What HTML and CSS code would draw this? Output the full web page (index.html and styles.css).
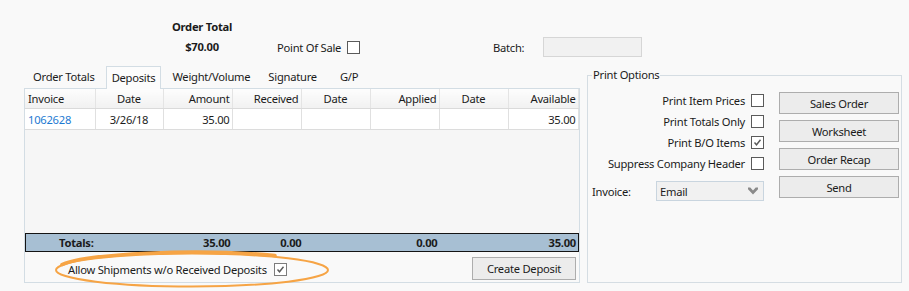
FILE: index.html
```html
<!DOCTYPE html>
<html lang="en">
<head>
    <meta charset="UTF-8">
    <meta name="viewport" content="width=device-width, initial-scale=1.0">
    <title>Order Deposits</title>
    <link rel="stylesheet" href="styles.css">
</head>
<body>
<div class="screen">
    <!-- Order header -->
    <div class="top">
        <div class="total-col">
            <div class="total-label">Order Total</div>
            <div class="total-value">$70.00</div>
        </div>
        <div class="top-fields">
            <div class="pos">
                <span>Point Of Sale</span>
                <span class="check"></span>
            </div>
            <div class="batch">
                <span class="batch-label">Batch:</span>
                <span class="batch-input"></span>
            </div>
        </div>
    </div>

    <div class="main">
        <!-- Tab control -->
        <div class="tabs">
            <div class="tab-strip">
                <div class="tab">Order Totals</div>
                <div class="tab active">Deposits</div>
                <div class="tab">Weight/Volume</div>
                <div class="tab">Signature</div>
                <div class="tab tab-gp">G/P</div>
            </div>
            <div class="tab-panel">
                <div class="grid">
                    <table class="deposits">
                        <colgroup>
                            <col class="c70"><col class="c68"><col class="c69"><col class="c69">
                            <col class="c69"><col class="c69"><col class="c69"><col class="c70">
                        </colgroup>
                        <thead>
                            <tr>
                                <th class="left">Invoice</th>
                                <th>Date</th>
                                <th class="right">Amount</th>
                                <th class="right">Received</th>
                                <th>Date</th>
                                <th class="right">Applied</th>
                                <th>Date</th>
                                <th class="right">Available</th>
                            </tr>
                        </thead>
                        <tbody>
                            <tr>
                                <td class="left link">1062628</td>
                                <td>3/26/18</td>
                                <td class="right">35.00</td>
                                <td></td>
                                <td></td>
                                <td></td>
                                <td></td>
                                <td class="right">35.00</td>
                            </tr>
                        </tbody>
                    </table>
                </div>
                <table class="totals">
                    <colgroup>
                        <col class="c70"><col class="c68"><col class="c69"><col class="c69">
                        <col class="c69"><col class="c69"><col class="c69"><col class="c70">
                    </colgroup>
                    <tr>
                        <td colspan="2" class="totals-label">Totals:</td>
                        <td>35.00</td>
                        <td class="flush">0.00</td>
                        <td></td>
                        <td>0.00</td>
                        <td></td>
                        <td>35.00</td>
                    </tr>
                </table>
                <div class="panel-foot">
                    <div class="allow">
                        <span>Allow Shipments w/o Received Deposits</span>
                        <span class="check">
                            <svg width="11" height="11" viewBox="0 0 11 11"><path d="M2.5 5.5 L4.5 7.8 L8.5 2.8" fill="none" stroke="#5a5a5a" stroke-width="1.4"/></svg>
                        </span>
                    </div>
                    <button class="btn deposit-btn">Create Deposit</button>
                </div>
            </div>
        </div>

        <!-- Print options group -->
        <fieldset class="print-options">
            <legend>Print Options</legend>
            <div class="opt-body">
                <div class="opt-left">
                    <div class="opt-row"><span>Print Item Prices</span><span class="check"></span></div>
                    <div class="opt-row"><span>Print Totals Only</span><span class="check"></span></div>
                    <div class="opt-row">
                        <span>Print B/O Items</span>
                        <span class="check">
                            <svg width="11" height="11" viewBox="0 0 11 11"><path d="M2.5 5.5 L4.5 7.8 L8.5 2.8" fill="none" stroke="#5a5a5a" stroke-width="1.4"/></svg>
                        </span>
                    </div>
                    <div class="opt-row"><span>Suppress Company Header</span><span class="check"></span></div>
                    <div class="invoice-row">
                        <span class="invoice-label">Invoice:</span>
                        <div class="select">
                            <span>Email</span>
                            <svg width="10" height="8" viewBox="0 0 10 8"><polygon points="0,0.5 2.3,0.5 5,3.6 7.7,0.5 10,0.5 10,2.2 5,7.5 0,2.2" fill="#8a8a8a"/></svg>
                        </div>
                    </div>
                </div>
                <div class="opt-right">
                    <button class="btn">Sales Order</button>
                    <button class="btn">Worksheet</button>
                    <button class="btn">Order Recap</button>
                    <button class="btn">Send</button>
                </div>
            </div>
        </fieldset>
    </div>

    <!-- highlight annotation drawn over the checkbox -->
    <svg class="mark" width="290" height="42" viewBox="0 0 290 42">
        <ellipse cx="142" cy="20" rx="136" ry="16.5" fill="none" stroke="#f6a445" stroke-width="2"/>
        <path d="M 12 14.6 A 137 17 0 0 1 225 5.5" fill="none" stroke="#f6a445" stroke-width="3.5" stroke-linecap="round"/>
    </svg>
</div>
</body>
</html>
```

FILE: styles.css
```css
/* Order deposits screen */
body {
    margin: 0;
    background-color: #f9f9f9;
    font-family: "Noto Sans", "Open Sans", sans-serif;
    font-size: 11.2px;
    letter-spacing: -0.25px;
    color: #1b1b1b;
}

.screen {
    position: relative;
    width: 909px;
    height: 291px;
    overflow: hidden;
}

/* header */
.top {
    display: flex;
    height: 65px;
    padding-top: 19px;
    box-sizing: border-box;
}

.total-col {
    width: 100px;
    margin-left: 152px;
    text-align: center;
    font-weight: bold;
    line-height: 16px;
}

.total-value {
    margin-top: 4px;
}

.top-fields {
    display: flex;
    margin-top: 20px;
    height: 16px;
    align-items: center;
}

.pos {
    display: flex;
    align-items: center;
    gap: 6px;
    width: 200px;
    margin-left: 25px;
}

.batch {
    display: flex;
    align-items: center;
    margin-left: 16px;
}

.batch-label {
    width: 50px;
}

.batch-input {
    width: 97px;
    height: 18px;
    background-color: #f1f1f1;
    border: 1px solid #d6d6d6;
}

.check {
    display: inline-flex;
    align-items: center;
    justify-content: center;
    width: 11px;
    height: 11px;
    background-color: #fff;
    border: 1px solid #5a5a5a;
}

/* tabs */
.main {
    display: flex;
    align-items: flex-start;
    margin-left: 24px;
}

.tabs {
    width: 556px;
}

.tab-strip {
    display: flex;
    height: 23px;
    align-items: flex-end;
}

.tab {
    padding: 0 9px;
    line-height: 22px;
    height: 22px;
}

.tab.active {
    position: relative;
    padding: 0 5px;
    margin: 0 2px;
    height: 22px;
    border: 1px solid #d3dde4;
    border-bottom: none;
    background-color: #fcfcfc;
    margin-bottom: -1px;
    z-index: 1;
}

.tab-gp {
    padding-left: 14px;
}

.tab-panel {
    height: 195px;
    border: 1px solid #d3dde4;
    box-sizing: border-box;
    background-color: #f9f9f9;
}

.grid {
    height: 144px;
    background-color: #f6f6f6;
}

table {
    border-collapse: collapse;
    table-layout: fixed;
    width: 553px;
}

.c70 { width: 70px; }
.c68 { width: 68px; }
.c69 { width: 69px; }

.deposits th {
    height: 19px;
    padding: 0 2px;
    font-weight: normal;
    text-align: center;
    white-space: nowrap;
    overflow: hidden;
    background: linear-gradient(#fdfdfd, #f1f1f1);
    border-right: 1px solid #e4e4e4;
    border-bottom: 1px solid #dadada;
}

.deposits td {
    height: 20px;
    padding: 0 2px;
    text-align: center;
    background-color: #fff;
    border-right: 1px solid #e0e0e0;
    border-bottom: 1px solid #dcdcdc;
}

.deposits .left { text-align: left; padding-left: 3px; }
.deposits .right { text-align: right; }
.deposits .link { color: #1d7ad2; }

.totals {
    height: 19px;
    background-color: #a7bfd3;
    border: 1px solid #141414;
    font-weight: bold;
}

.totals td {
    padding: 0 2px 0 0;
    text-align: right;
    line-height: 15px;
}

.totals td.flush {
    padding-right: 0;
}

.totals td.totals-label {
    text-align: left;
    padding-left: 33px;
}

.panel-foot {
    display: flex;
    align-items: center;
    justify-content: space-between;
    padding: 5px 3px 0 43px;
}

.allow {
    display: flex;
    align-items: center;
    gap: 7px;
    margin-top: 2px;
}

.allow .check {
    border-color: #7c7c7c;
}

.btn {
    height: 22px;
    padding: 0;
    background-color: #ececec;
    border: 1px solid #adadad;
    font-family: inherit;
    font-size: inherit;
    letter-spacing: inherit;
    color: #1b1b1b;
}

.deposit-btn {
    width: 104px;
    height: 23px;
}

/* print options */
.print-options {
    width: 315px;
    height: 215px;
    margin: 3px 0 0 7px;
    padding: 0 2px 0 4px;
    border: 1px solid #d5dde3;
    box-sizing: border-box;
}

.print-options legend {
    padding: 0 1px;
    line-height: 14px;
}

.opt-body {
    display: flex;
    margin-top: 8px;
}

.opt-left {
    width: 172px;
}

.opt-row {
    display: flex;
    justify-content: flex-end;
    align-items: center;
    gap: 6px;
    height: 21px;
}

.invoice-row {
    display: flex;
    align-items: center;
    margin-top: 7px;
}

.invoice-label {
    width: 64px;
}

.select {
    display: flex;
    align-items: center;
    justify-content: space-between;
    width: 108px;
    height: 20px;
    padding: 0 5px 0 3px;
    box-sizing: border-box;
    background-color: #f1f1f1;
    border: 1px solid #c9d5df;
}

.opt-right {
    display: flex;
    flex-direction: column;
    gap: 6px;
    width: 120px;
    margin-left: 15px;
    margin-top: 2px;
}

.mark {
    position: absolute;
    left: 50px;
    top: 250px;
}
```
